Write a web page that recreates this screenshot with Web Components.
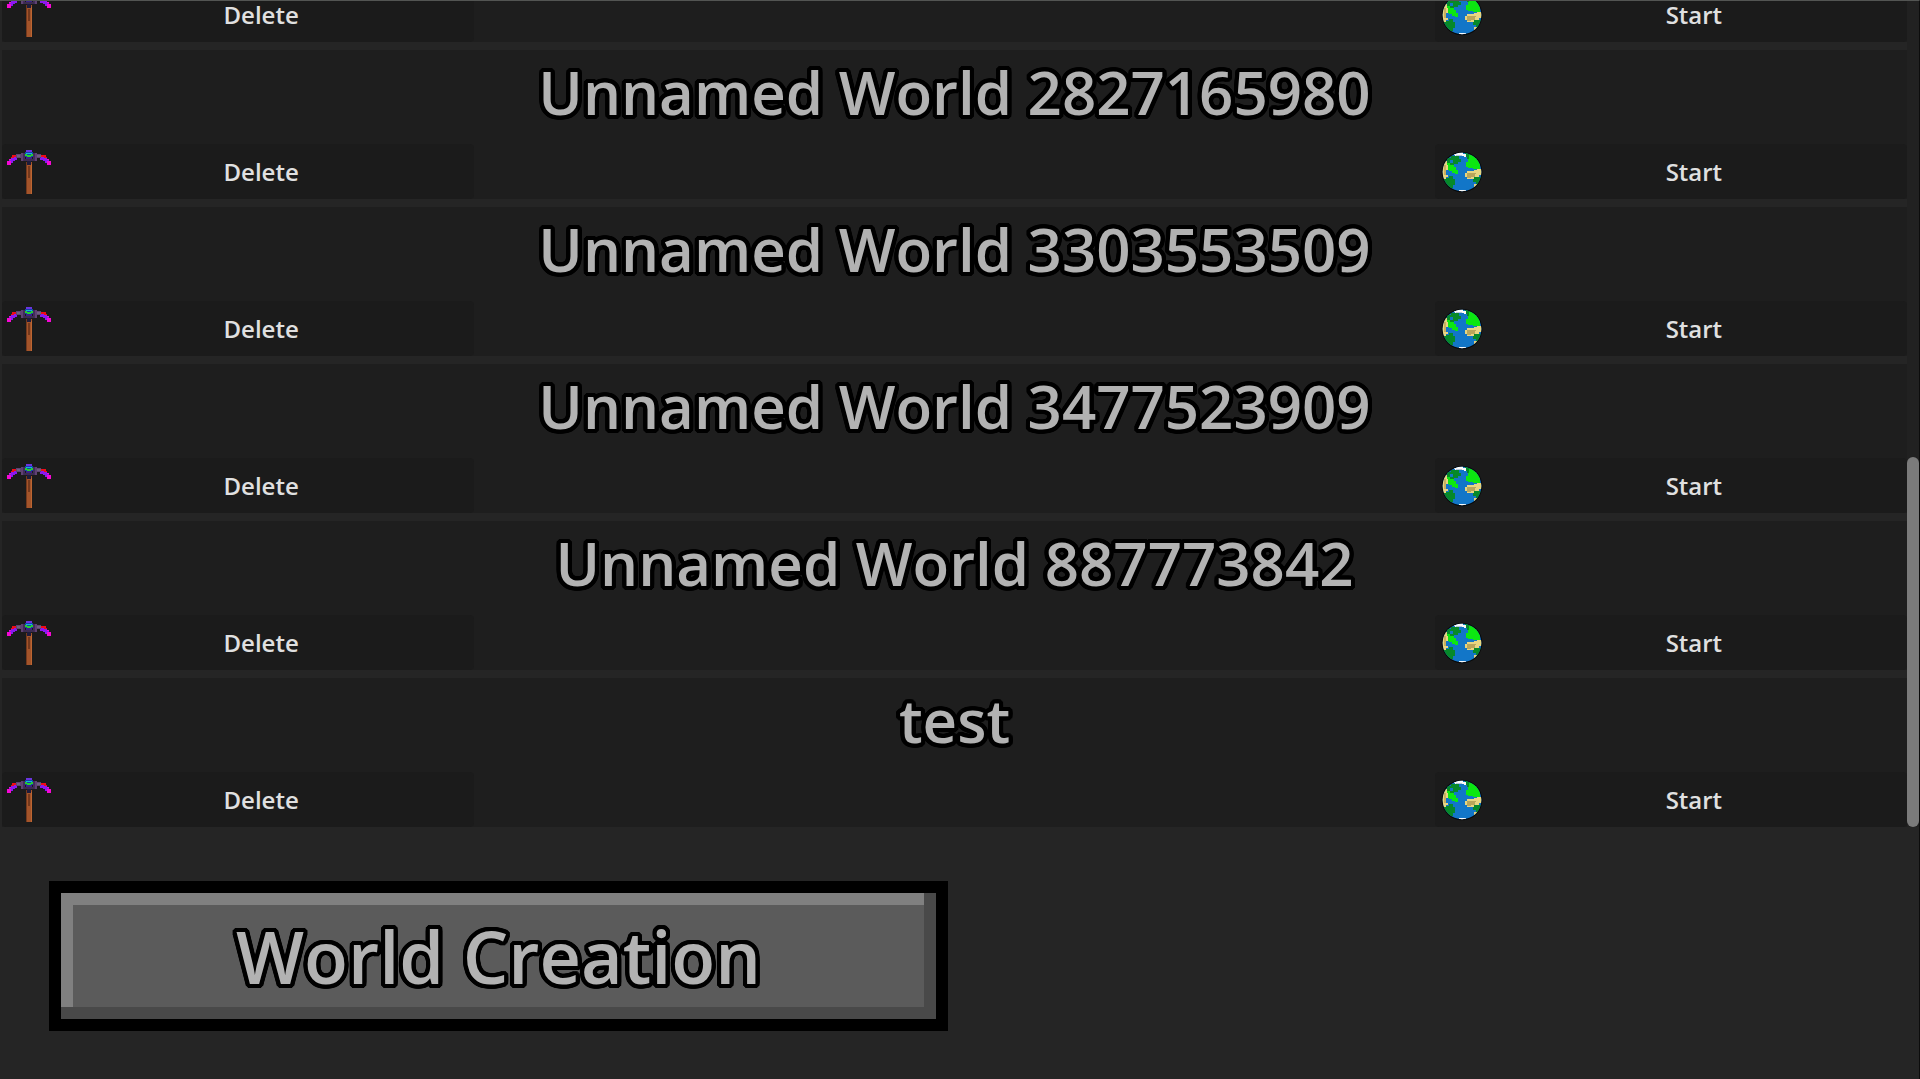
<!DOCTYPE html>
<html lang="en">
<head>
<meta charset="utf-8">
<title>Worlds</title>
<style>
    :root{
        --color--page:#252525;
        --color--row:#1e1e1e;
        --color--button:#1b1b1b;
        --color--text:#e0e0e0;
        --color--title:#b2b2b2;
        --outline:
            4px 0 #000, 4px 1px #000, 4px 2px #000, 3px 3px #000, 2px 4px #000, 1px 4px #000,
            0 4px #000, -1px 4px #000, -2px 4px #000, -3px 3px #000, -4px 2px #000, -4px 1px #000,
            -4px 0 #000, -4px -1px #000, -4px -2px #000, -3px -3px #000, -2px -4px #000, -1px -4px #000,
            0 -4px #000, 1px -4px #000, 2px -4px #000, 3px -3px #000, 4px -2px #000, 4px -1px #000,
            2px 0 #000, -2px 0 #000, 0 2px #000, 0 -2px #000;
    }
    html, body{
        height:100%;
        margin:0;
    }
    body{
        background:var(--color--page);
        color:var(--color--text);
        font-family:"Open Sans", "Noto Sans", sans-serif;
        font-weight:600;
    }
</style>
</head>
<body>
<world-menu></world-menu>
<script>
class PickaxeIcon extends HTMLElement {
    constructor() {
        super();
        this.attachShadow({ mode: 'open' });
    }

    connectedCallback() {
        this.shadowRoot.innerHTML = /*html*/`
        <style>
            :host{ display:block; width:44px; height:44px; }
            svg{ display:block; width:100%; height:100%; }
        </style>
        <svg viewBox="22 27 132 132" shape-rendering="crispEdges" aria-hidden="true">
            <defs>
                <g id="arm">
                    <path fill="#f508d5" d="M22 60h5v-6h6v-6h8v-5h12v13h-7v5h-6v5h-6v6h-12z"/>
                    <path fill="#ef0c18" d="M37 42h14v6h-8v4h-9v-5h3z"/>
                    <path fill="#8a18f0" d="M43 48h10v8h-7v5h-6v5h-7v-5h-5v-4h6v-5h9z"/>
                    <path fill="#5f4273" d="M50 39h14v-4h12v24h-12v-7h-14z"/>
                    <path fill="#6f5f80" d="M52 42h10v5h-10z"/>
                    <path fill="#432c5c" d="M70 35h6v24h-6z"/>
                </g>
            </defs>
            <path fill="#a3542a" d="M78 62h19v97h-19z"/>
            <path fill="#74391d" d="M78 62h4v97h-4zM86 76h5v34h-5z"/>
            <path fill="#bd6632" d="M93 68h4v91h-4z"/>
            <use href="#arm"/>
            <use href="#arm" transform="translate(175) scale(-1 1)"/>
            <path fill="#3c2c50" d="M74 54h28v6h-28z"/>
            <path fill="#1d1c3c" d="M82 60h12v12h-12z"/>
            <path fill="#6a35e0" d="M78 27h20v8h-20z"/>
            <path fill="#173fae" d="M76 32h24v16h-24z"/>
            <path fill="#14b8d8" d="M80 35h16v5h-16z"/>
            <path fill="#25cf31" d="M77 38h5v6h-5zM95 38h5v6h-5zM82 43h13v5h-13z"/>
            <path fill="#3b218c" d="M80 48h17v6h-17z"/>
        </svg>
    `;
    }
}
customElements.define('pickaxe-icon', PickaxeIcon);

class GlobeIcon extends HTMLElement {
    constructor() {
        super();
        this.attachShadow({ mode: 'open' });
    }

    connectedCallback() {
        this.shadowRoot.innerHTML = /*html*/`
        <style>
            :host{ display:block; width:44px; height:44px; }
            svg{ display:block; width:100%; height:100%; }
        </style>
        <svg viewBox="33 26 132 132" aria-hidden="true">
            <defs><clipPath id="ball"><circle cx="99" cy="92" r="58"/></clipPath></defs>
            <circle cx="99" cy="92" r="61" fill="#090909"/>
            <g clip-path="url(#ball)" shape-rendering="crispEdges">
                <path fill="#1276c8" d="M39 32h120v120h-120z"/>
                <path fill="#06892a" d="M55 50h12v-6h22v9h6v10h-8v4h-13v4h-12v-5h-7zM50 110h10v-5h12v8h5v18h-6v8h-28v-25h7z"/>
                <path fill="#0ce711" d="M53 64h9v6h12v6h8v9h6v14h-10v-5h-9v-4h-10v-4h-8v-6h-6v-7h8z"/>
                <path fill="#1276c8" d="M64 56h8v8h-8z"/>
                <path fill="#e8d681" d="M39 60h14v12h4v14h-5v16h5v6h-6v6h-12z"/>
                <path fill="#c9b060" d="M46 72h6v30h-6z"/>
                <path fill="#0ce711" d="M118 40h20v10h15v34h-22v-3h-13v-5h-6v-14h5v-9h4z"/>
                <path fill="#06892a" d="M108 35h18v6h-7v12h-5v-6h-6zM135 108h25v20h-20v-5h-8v-9h3z"/>
                <path fill="#e8d681" d="M145 82h15v20h-11v6h-13v5h-21v-5h-7v-13h6v-5h20v-4h11z"/>
                <path fill="#b9a65c" d="M114 94h28v5h-5v7h-12v5h-11z"/>
                <path fill="#e3cf7c" d="M135 128h14v6h-8v6h-6z"/>
                <path fill="#fafafa" d="M74 38h8v-6h20v7h10v9h-8v-4h-27v-3h-3zM90 147h20v6h-20z"/>
                <path fill="#b8c8d8" d="M80 41h20v3h-20z"/>
            </g>
        </svg>
    `;
    }
}
customElements.define('globe-icon', GlobeIcon);

class IconButton extends HTMLElement {
    constructor() {
        super();
        this.attachShadow({ mode: 'open' });
    }

    static get styles() {
        return /*css*/`
        :host{
            display:block;
        }
        button{
            display:flex;
            align-items:center;
            width:100%;
            height:55px;
            padding:0 3px 0 5px;
            border:0;
            border-radius:4px;
            background:var(--color--button);
            color:inherit;
            font:inherit;
            font-size:24px;
            line-height:34px;
            cursor:pointer;
        }
        .label{
            flex:1;
            text-align:center;
        }
    `;
    }

    connectedCallback() {
        this.shadowRoot.innerHTML = /*html*/`
        <style>${IconButton.styles}</style>
        <button type="button">
            <slot name="icon"></slot>
            <span class="label"><slot></slot></span>
        </button>
    `;
    }
}
customElements.define('icon-button', IconButton);

class WorldRow extends HTMLElement {
    constructor() {
        super();
        this.attachShadow({ mode: 'open' });
    }

    static get styles() {
        return /*css*/`
        :host{
            display:block;
            background:var(--color--row);
        }
        h2{
            height:84px;
            margin:0 0 10px;
            color:var(--color--title);
            font-size:60px;
            font-weight:600;
            line-height:84px;
            text-align:center;
            text-shadow:var(--outline);
        }
        .actions{
            display:grid;
            grid-template-columns:1fr 2fr 1fr;
            gap:8px;
        }
        .start{
            grid-column:3;
        }
    `;
    }

    connectedCallback() {
        this.shadowRoot.innerHTML = /*html*/`
        <style>${WorldRow.styles}</style>
        <h2><slot></slot></h2>
        <div class="actions">
            <icon-button><pickaxe-icon slot="icon"></pickaxe-icon>Delete</icon-button>
            <icon-button class="start"><globe-icon slot="icon"></globe-icon>Start</icon-button>
        </div>
    `;
    }
}
customElements.define('world-row', WorldRow);

class WorldList extends HTMLElement {
    constructor() {
        super();
        this.attachShadow({ mode: 'open' });
    }

    static get styles() {
        return /*css*/`
        :host{
            display:flex;
            overflow:hidden;
        }
        .rows{
            flex:1;
            display:flex;
            flex-direction:column;
            justify-content:flex-end;
            gap:8px;
        }
        .track{
            display:flex;
            align-items:flex-end;
            width:12px;
            background:#212121;
        }
        .thumb{
            width:100%;
            height:370px;
            border-radius:6px;
            background:#7b7b7b;
        }
        ::slotted(world-row){
            flex:none;
        }
    `;
    }

    connectedCallback() {
        this.shadowRoot.innerHTML = /*html*/`
        <style>${WorldList.styles}</style>
        <div class="rows"><slot></slot></div>
        <div class="track"><div class="thumb"></div></div>
    `;
    }
}
customElements.define('world-list', WorldList);

class BevelButton extends HTMLElement {
    constructor() {
        super();
        this.attachShadow({ mode: 'open' });
    }

    static get styles() {
        return /*css*/`
        :host{
            display:block;
        }
        button{
            display:block;
            width:100%;
            height:150px;
            padding:0;
            border:12px solid #000;
            background:#5b5b5b;
            box-shadow:
                inset 0 -12px #494949,
                inset -12px 0 #494949,
                inset 0 12px #808080,
                inset 12px 0 #808080;
            color:var(--color--title);
            font:inherit;
            font-size:72px;
            line-height:98px;
            text-shadow:var(--outline);
            cursor:pointer;
        }
    `;
    }

    connectedCallback() {
        this.shadowRoot.innerHTML = /*html*/`
        <style>${BevelButton.styles}</style>
        <button type="button"><slot></slot></button>
    `;
    }
}
customElements.define('bevel-button', BevelButton);

class WorldMenu extends HTMLElement {
    constructor() {
        super();
        this.attachShadow({ mode: 'open' });
    }

    static get styles() {
        return /*css*/`
        :host{
            display:flex;
            flex-direction:column;
            box-sizing:border-box;
            height:100vh;
            border-top:1px solid #535553;
            border-right:1px solid #0c0c0c;
        }
        world-list{
            flex:1;
            min-height:0;
            padding-left:2px;
        }
        .bottom{
            display:grid;
            grid-template-columns:1fr 1fr;
            gap:23px;
            padding:54px 49px 48px;
        }
    `;
    }

    connectedCallback() {
        this.shadowRoot.innerHTML = /*html*/`
        <style>${WorldMenu.styles}</style>
        <world-list>
            <world-row></world-row>
            <world-row>Unnamed World 2827165980</world-row>
            <world-row>Unnamed World 3303553509</world-row>
            <world-row>Unnamed World 3477523909</world-row>
            <world-row>Unnamed World 887773842</world-row>
            <world-row>test</world-row>
        </world-list>
        <div class="bottom">
            <bevel-button>World Creation</bevel-button>
        </div>
    `;
    }
}
customElements.define('world-menu', WorldMenu);
</script>
</body>
</html>
